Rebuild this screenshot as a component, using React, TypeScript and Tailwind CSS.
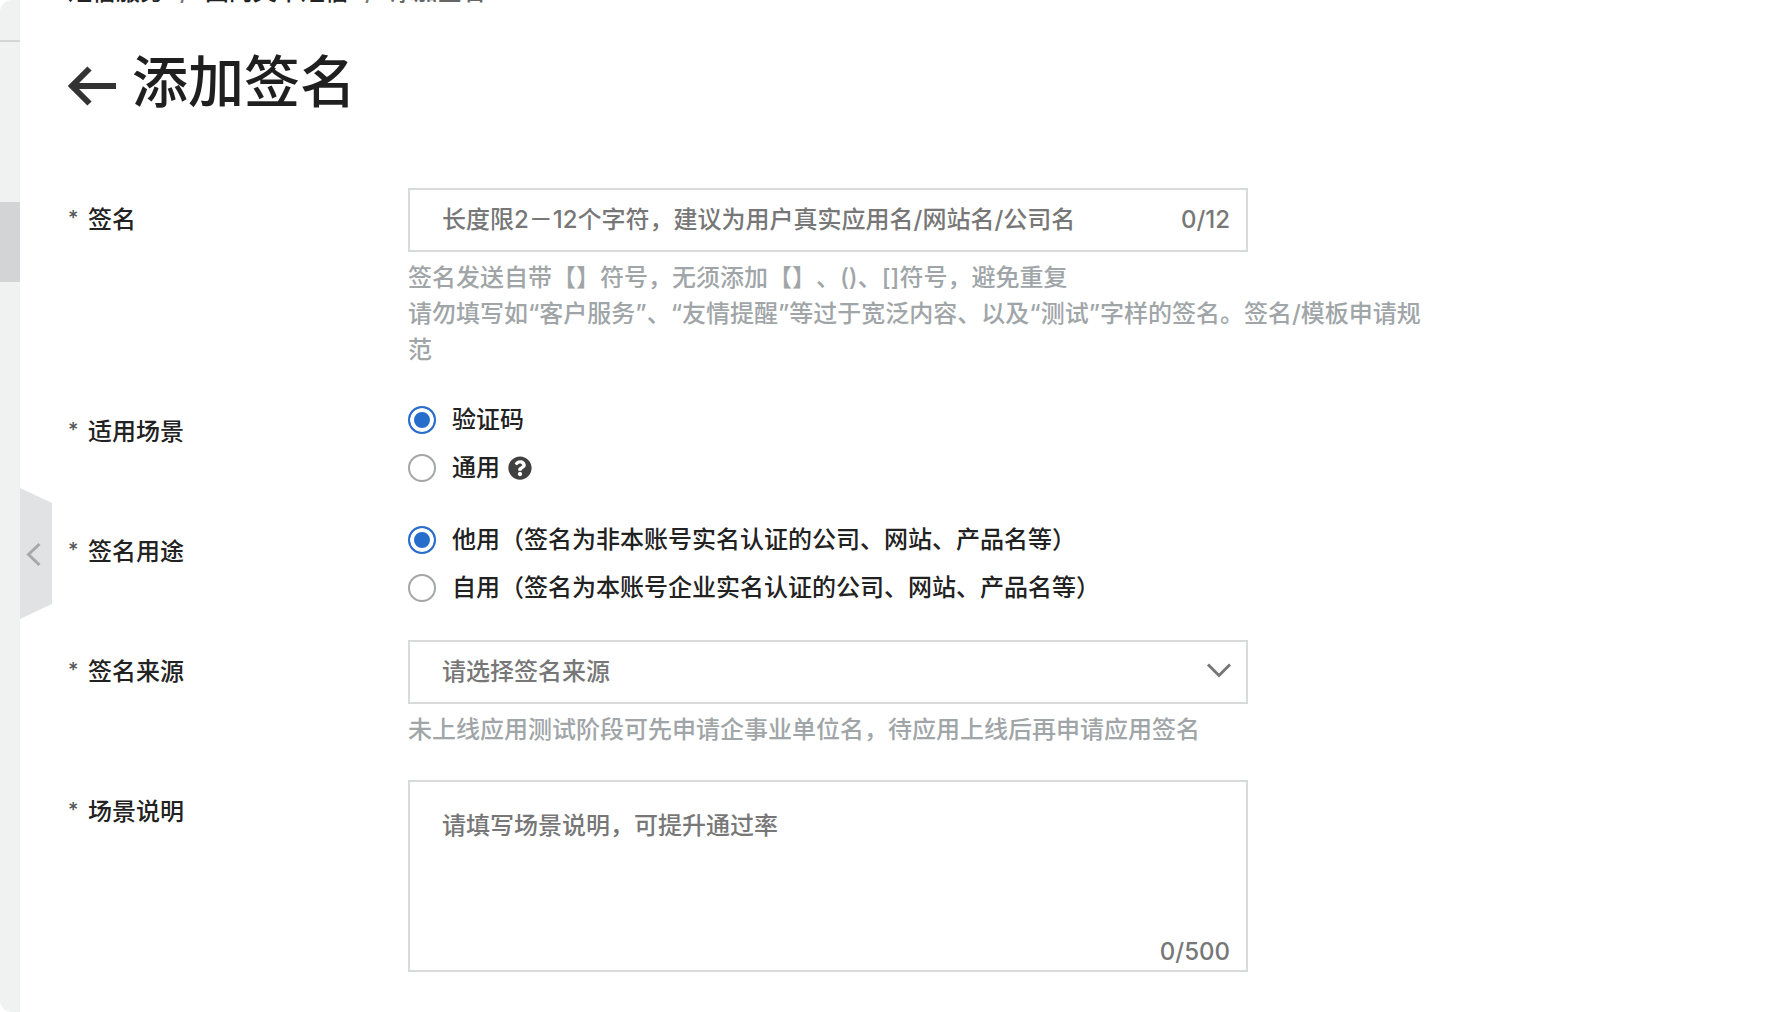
import { useState } from "react";
import type { ReactNode } from "react";
import { FaQuestionCircle } from "react-icons/fa";

type RowProps = {
  label: string;
  htmlFor?: string;
  labelClass: string;
  children: ReactNode;
};

function FormRow({ label, htmlFor, labelClass, children }: RowProps) {
  const content = (
    <>
      <span className="w-5 text-xl leading-8 text-[#555555]">*</span>
      {label}
    </>
  );

  return (
    <div className="flex items-start" role={htmlFor ? undefined : "radiogroup"} aria-label={htmlFor ? undefined : label}>
      <div className={`w-[340px] shrink-0 leading-9 ${labelClass}`}>
        {htmlFor ? (
          <label htmlFor={htmlFor} className="flex">{content}</label>
        ) : (
          <div className="flex">{content}</div>
        )}
      </div>
      <div className="min-w-0 max-w-[1020px] flex-1">{children}</div>
    </div>
  );
}

type RadioProps = {
  name: string;
  checked: boolean;
  onChange: () => void;
  children: ReactNode;
};

function RadioOption({ name, checked, onChange, children }: RadioProps) {
  return (
    <label className="flex h-12 items-center gap-4 text-[#222222]">
      <input
        type="radio"
        name={name}
        checked={checked}
        onChange={onChange}
        className="size-7 shrink-0 appearance-none rounded-full border-2 border-[#a3a7aa] bg-white checked:border-[#276dcc] checked:bg-[#276dcc] checked:shadow-[inset_0_0_0_4px_white]"
      />
      <span className="flex items-center gap-2">{children}</span>
    </label>
  );
}

function Sidebar() {
  return (
    <aside className="relative w-5 shrink-0 rounded-l-xl bg-[#f0f2f2]">
      <div className="h-[42px] border-b-2 border-[#d4d6d6]" />
      <div className="mt-40 h-20 bg-[#d3d4d6]" />
      {/* サイドバー開閉ハンドル */}
      <button type="button" aria-label="收起" className="absolute top-[488px] left-full">
        <svg width="32" height="132" viewBox="0 0 32 132" fill="none">
          <path d="M0 0L32 15V116L0 131Z" fill="#e0e2e3" />
          <path d="M19.500 56L8.500 66.500L19.500 77" stroke="#a6a8aa" strokeWidth="3" />
        </svg>
      </button>
    </aside>
  );
}

export default function App() {
  const [name, setName] = useState("");
  const [scene, setScene] = useState("code");
  const [usage, setUsage] = useState("other");
  const [desc, setDesc] = useState("");

  return (
    <div className="flex min-h-screen bg-white font-['Inter','Noto_Sans_CJK_SC',sans-serif] text-2xl font-medium text-[#222222] [text-spacing-trim:space-all]">
      <Sidebar />

      <main className="min-w-0 flex-1 pl-12">
        {/* パンくず（上端で見切れる） */}
        <div className="flex h-2 items-end overflow-hidden">
          <nav className="flex gap-4 leading-8">
            <a href="#sms">短信服务</a>
            <span className="text-[#777777]">/</span>
            <a href="#text">国内文本短信</a>
            <span className="text-[#777777]">/</span>
            <span className="text-[#666666]">添加签名</span>
          </nav>
        </div>

        <div className="mt-8 flex items-center gap-4">
          <button type="button" aria-label="返回" className="pt-2">
            <svg width="48" height="40" viewBox="0 0 48 40" fill="none" stroke="#333333">
              <path d="M4 20H48" strokeWidth="6" />
              <path d="M21.500 2.500L4 20L21.500 37.500" strokeWidth="6" />
            </svg>
          </button>
          <h1 className="text-[56px] leading-[84px] text-[#1f1f1f]">添加签名</h1>
        </div>

        <form className="mt-16">
          <FormRow label="签名" htmlFor="sign-name" labelClass="pt-3.5">
            <div className="flex h-16 max-w-[840px] items-center border-2 border-[#d9dbdb] pr-4 pl-8">
              <input
                id="sign-name"
                type="text"
                maxLength={12}
                value={name}
                onChange={(e) => setName(e.target.value)}
                placeholder="长度限2－12个字符，建议为用户真实应用名/网站名/公司名"
                className="min-w-0 flex-1 outline-none placeholder:text-[#777777]"
              />
              <span className="text-[#777777]">{name.length}/12</span>
            </div>
            <p className="mt-2 leading-9 text-[#a0a5a8]">
              签名发送自带【】符号，无须添加【】、()、[]符号，避免重复
              <br />
              请勿填写如“客户服务”、“友情提醒”等过于宽泛内容、以及“测试”字样的签名。签名/模板申请规范
            </p>
          </FormRow>

          <div className="mt-7">
            <FormRow label="适用场景" labelClass="pt-[18px]">
              <RadioOption name="scene" checked={scene === "code"} onChange={() => setScene("code")}>
                验证码
              </RadioOption>
              <RadioOption name="scene" checked={scene === "common"} onChange={() => setScene("common")}>
                通用
                <FaQuestionCircle className="size-6 text-[#404040]" />
              </RadioOption>
            </FormRow>
          </div>

          <div className="mt-6">
            <FormRow label="签名用途" labelClass="pt-[18px]">
              <RadioOption name="usage" checked={usage === "other"} onChange={() => setUsage("other")}>
                他用（签名为非本账号实名认证的公司、网站、产品名等）
              </RadioOption>
              <RadioOption name="usage" checked={usage === "self"} onChange={() => setUsage("self")}>
                自用（签名为本账号企业实名认证的公司、网站、产品名等）
              </RadioOption>
            </FormRow>
          </div>

          <div className="mt-7">
            <FormRow label="签名来源" htmlFor="sign-source" labelClass="pt-3.5">
              <div className="relative max-w-[840px]">
                <select
                  id="sign-source"
                  defaultValue=""
                  className="block h-16 w-full appearance-none border-2 border-[#d9dbdb] bg-white pr-16 pl-8 text-[#777777] outline-none"
                >
                  <option value="">请选择签名来源</option>
                </select>
                <svg
                  className="pointer-events-none absolute top-[23px] right-4"
                  width="26"
                  height="16"
                  viewBox="0 0 26 16"
                  fill="none"
                >
                  <path d="M2 1.500L13 12.500L24 1.500" stroke="#777777" strokeWidth="3" />
                </svg>
              </div>
              <p className="mt-2 leading-9 text-[#a0a5a8]">
                未上线应用测试阶段可先申请企事业单位名，待应用上线后再申请应用签名
              </p>
            </FormRow>
          </div>

          <div className="mt-8">
            <FormRow label="场景说明" htmlFor="sign-desc" labelClass="pt-3.5">
              <div className="flex max-w-[840px] flex-col border-2 border-[#d9dbdb] pt-6 pr-4 pl-8">
                <textarea
                  id="sign-desc"
                  maxLength={500}
                  value={desc}
                  onChange={(e) => setDesc(e.target.value)}
                  placeholder="请填写场景说明，可提升通过率"
                  className="h-32 resize-none leading-10 outline-none placeholder:text-[#777777]"
                />
                <span className="self-end leading-9 text-[#777777]">{desc.length}/500</span>
              </div>
            </FormRow>
          </div>
        </form>
      </main>
    </div>
  );
}
